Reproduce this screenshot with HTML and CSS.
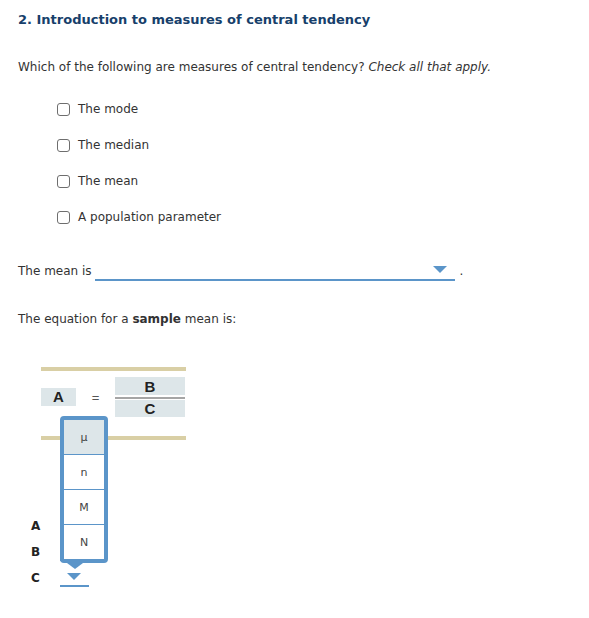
FILE: index.html
```html
<!DOCTYPE html>
<html>
<head>
<meta charset="utf-8">
<link rel="stylesheet" href="styles.css">
</head>
<body>
<div class="page">
  <h1 class="title">2. Introduction to measures of central tendency</h1>
  <p class="question">Which of the following are measures of central tendency? <em>Check all that apply.</em></p>
  <ul class="options">
    <li class="option"><span class="box"></span>The mode</li>
    <li class="option"><span class="box"></span>The median</li>
    <li class="option"><span class="box"></span>The mean</li>
    <li class="option"><span class="box"></span>A population parameter</li>
  </ul>
  <div class="mean-row">
    <span>The mean is</span>
    <span class="select wide"><span class="tri"></span></span>
    <span class="dot">.</span>
  </div>
  <p class="eq-text">The equation for a <b>sample</b> mean is:</p>
  <div class="eq">
    <div class="eq-row">
      <span class="slot a">A</span>
      <span class="equals">=</span>
      <span class="frac">
        <span class="slot num">B</span>
        <span class="bar"></span>
        <span class="slot den">C</span>
      </span>
    </div>
  </div>
  <div class="answers">
    <div class="ans"><span class="lbl">A</span><span class="select small"><span class="tri"></span></span></div>
    <div class="ans"><span class="lbl">B</span><span class="select small"><span class="tri"></span></span></div>
    <div class="ans"><span class="lbl">C</span><span class="select small"><span class="tri"></span></span></div>
    <div class="list">
      <div class="item sel">μ</div>
      <div class="item">n</div>
      <div class="item">M</div>
      <div class="item">N</div>
      <span class="pointer"></span>
    </div>
  </div>
</div>
</body>
</html>
```
FILE: styles.css
```css
* { box-sizing: border-box; }
body { margin: 0; background: #fff; }
.page {
  padding: 12px 18px;
  font-family: "DejaVu Sans", Verdana, sans-serif;
  font-size: 12px;
  color: #333;
  position: relative;
}
.title {
  margin: 0;
  font-size: 13px;
  line-height: 16px;
  font-weight: bold;
  color: #173f6b;
}
.question {
  margin: 31px 0 0;
  line-height: 16px;
}
.question em { font-style: italic; }
.options {
  list-style: none;
  margin: 16px 0 0 39px;
  padding: 0;
}
.option {
  height: 36px;
  display: flex;
  align-items: center;
}
.box {
  width: 13px;
  height: 13px;
  border: 1px solid #6e6e6e;
  border-radius: 3px;
  margin-right: 8px;
}
.mean-row {
  margin-top: 26px;
  height: 20px;
  display: flex;
  align-items: center;
}
.select {
  position: relative;
  display: inline-block;
  border-bottom: 2px solid #5b95c9;
}
.select.wide {
  width: 360px;
  height: 20px;
  margin-left: 3px;
}
.tri {
  position: absolute;
  width: 0;
  height: 0;
  border-left: 7px solid transparent;
  border-right: 7px solid transparent;
  border-top: 7px solid #5b95c9;
}
.wide .tri { right: 8px; top: 5px; }
.dot { margin-left: 5px; }
.eq-text {
  margin: 30px 0 0;
  line-height: 16px;
}
.eq {
  margin: 40px 0 0 23px;
  width: 145px;
  border-top: 4px solid #d9cfa5;
  border-bottom: 4px solid #d9cfa5;
  padding: 6px 0 19px;
}
.eq-row {
  display: flex;
  align-items: center;
  font-family: "Liberation Sans", Arial, sans-serif;
}
.slot {
  background: #dde6e9;
  font-weight: bold;
  font-size: 15px;
  color: #222;
  display: flex;
  align-items: center;
  justify-content: center;
}
.a { width: 35px; height: 18px; margin-top: -1px; }
.equals { width: 39px; text-align: center; color: #555; font-size: 13px; }
.frac { display: flex; flex-direction: column; width: 70px; }
.num { height: 18px; }
.bar { height: 2px; background: #a5a5a5; margin: 2px 0 1px; }
.den { height: 17px; }
.answers {
  margin-top: 73px;
  position: relative;
}
.ans {
  height: 26px;
  display: flex;
  align-items: center;
  margin-left: 13px;
}
.lbl {
  width: 29px;
  font-weight: bold;
  font-size: 12px;
  color: #222;
}
.select.small {
  width: 29px;
  height: 14px;
  align-self: flex-start;
  margin-top: 8px;
}
.small .tri { left: 7px; top: 0; }
.list {
  position: absolute;
  left: 42px;
  top: -97px;
  width: 48px;
  border: 4px solid #5b95c9;
  border-radius: 4px;
  background: #fff;
}
.item {
  height: 35px;
  display: flex;
  align-items: center;
  justify-content: center;
  border-top: 1px solid #5b95c9;
  color: #444;
  font-size: 11px;
}
.item:first-child { border-top: 0; height: 34px; }
.item.sel { background: #dde6e9; }
.pointer {
  position: absolute;
  left: 3px;
  bottom: -10px;
  width: 0;
  height: 0;
  border-left: 8px solid transparent;
  border-right: 8px solid transparent;
  border-top: 6px solid #5b95c9;
}
```
